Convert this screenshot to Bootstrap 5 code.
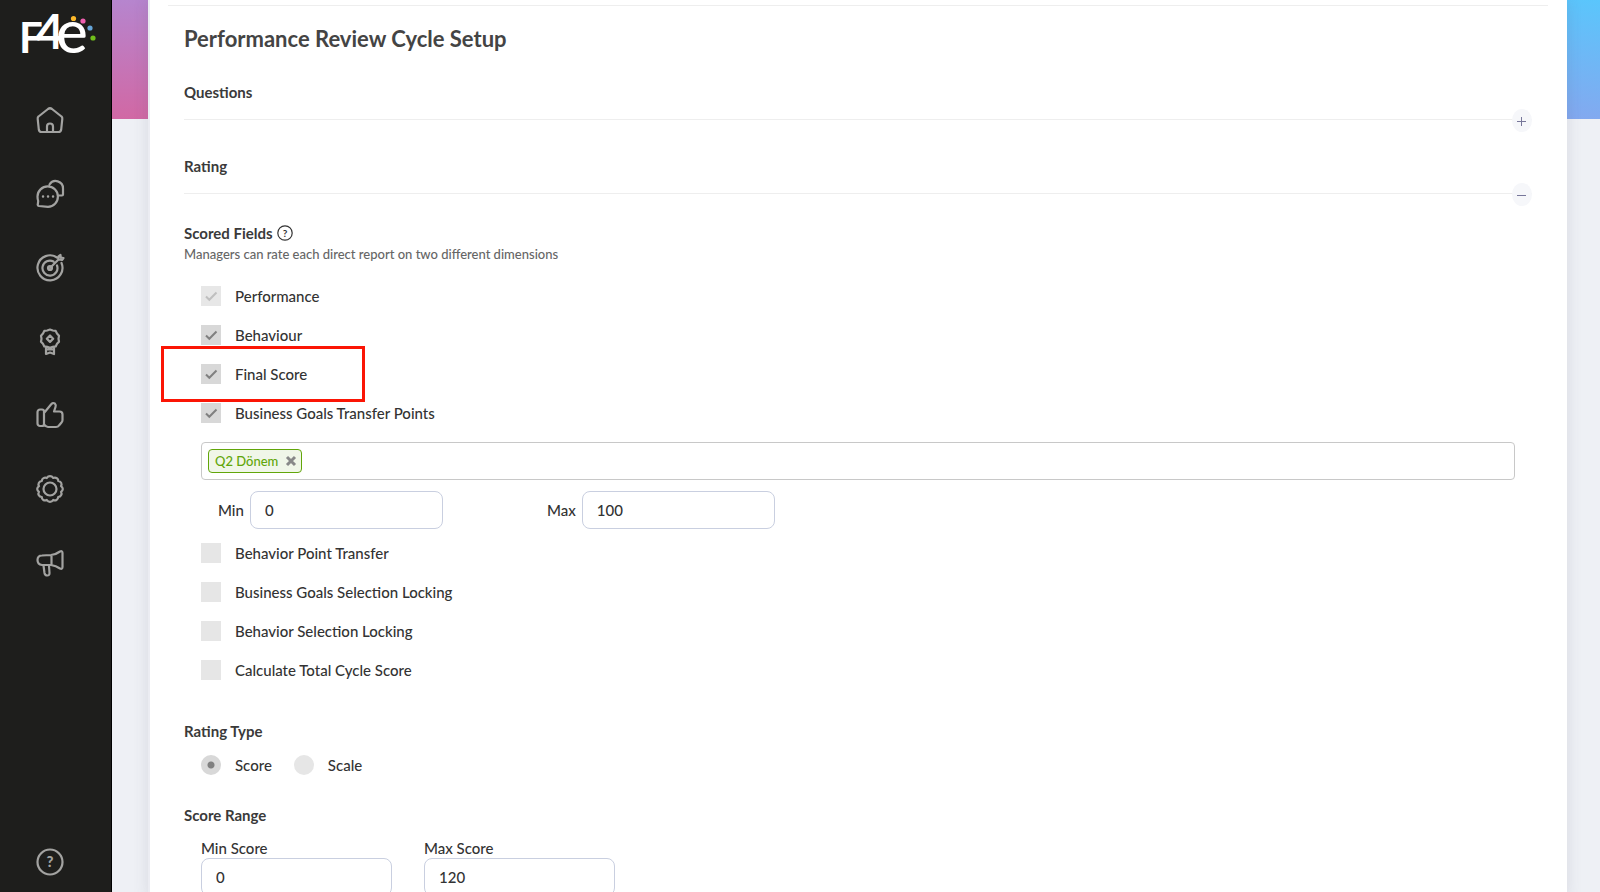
<!DOCTYPE html>
<html lang="en">
<head>
<meta charset="utf-8">
<meta name="viewport" content="width=device-width, initial-scale=1">
<title>Performance Review Cycle Setup</title>
<link rel="stylesheet" href="https://cdn.jsdelivr.net/npm/bootstrap@5.3.0/dist/css/bootstrap.min.css">
<script src="https://cdn.jsdelivr.net/npm/bootstrap@5.3.0/dist/js/bootstrap.bundle.min.js" defer></script>
<style>
  body { font-family: Lato, "Liberation Sans", sans-serif; font-size: 15px; line-height: 20px; font-weight: 500; color: #333; background: #eef0f5; }
  .side { width: 112px; background: #1e1e1c; border-right: 1px solid #000; padding: 8px 11px 16px 0; }
  .side a { color: #a3a3a1; line-height: 0; }
  .side svg { fill: none; stroke: currentColor; stroke-width: 2.2; stroke-linecap: round; stroke-linejoin: round; overflow: visible; }
  .side .logo text { fill: #fff; stroke: none; font-family: Lato, sans-serif; }
  .side-menu { gap: 46px; margin-top: 50px; }
  .stage { padding: 0 33px 0 36px;
    background: linear-gradient(#b685ce, #d168a4) left top / 38px 119px no-repeat,
                linear-gradient(190deg, #5ac6fc, #84a8ef) right top / 33px 119px no-repeat; }
  .sheet { background: #fff; border-left: 2px solid #ebecf2; box-shadow: 0 0 14px 1px rgba(70, 75, 100, .12); padding: 5px 19px 0 18px; min-height: 100%; }
  .sheet-top { border-top: 1px solid #eee; padding: 20px 16px 0; }
  h1 { font-size: 22px; line-height: 26px; font-weight: 700; color: #444; margin: 0 0 30px; }
  h2 { font-size: 15px; line-height: 20px; font-weight: 700; margin: 0; color: #3a3a3a; }
  .fold { border-bottom: 1px solid #eee; height: 38px; margin-bottom: 36px; }
  .fold-btn { position: absolute; right: 0; bottom: -13px; width: 20px; height: 23px; border: 0; border-radius: 50%; background: #f6f7fa; padding: 0; line-height: 0; color: #77779a; }
  .scored { margin-top: -7px; margin-bottom: 1px; }
  .hint { font-size: 13px; color: #666; margin-bottom: 22px; }
  .fields { padding: 0 17px; }
  .tick { gap: 14px; margin-bottom: 19px; min-height: 20px; }
  .tick input { appearance: none; width: 20px; height: 20px; margin: 0; background: #e6e6e6 center / 20px no-repeat; flex: none; }
  .tick input:checked { background-color: #d8d8d8; }
  .tick input[type=checkbox]:checked { background-image: url("data:image/svg+xml,%3Csvg xmlns='http://www.w3.org/2000/svg' viewBox='0 0 20 20'%3E%3Cpath d='M5 10.500l3.300 3.300L15.500 6.500' fill='none' stroke='%23808080' stroke-width='2'/%3E%3C/svg%3E"); }
  .tick input:disabled { opacity: .5; background-color: #d0d0d0 !important; }
  .tick input[type=radio] { border-radius: 50%; }
  .tick input[type=radio]:checked { background-image: radial-gradient(circle, #808080 3px, transparent 4px); }
  .callout { position: absolute; left: -40px; top: -18px; width: 204px; height: 56px; border: 3px solid #fb1505; pointer-events: none; }
  .tags { height: 38px; border: 1px solid #c8c8c8; border-radius: 4px; padding: 0 6px; margin-bottom: 11px; }
  .tag-item { height: 24px; border: 1px solid #62a60a; border-radius: 4px; background: #f0f6e8; color: #62a60a; font-size: 13px; padding: 0 4px 0 6px; gap: 7px; }
  .tag-item button { border: 0; background: none; padding: 0; line-height: 0; color: #888; }
  .num { height: 38px; width: 193px; border: 1px solid #c9cfe0; border-radius: 8px; padding: 0 14px; font-size: 15px; color: #333; font-weight: 500; }
  .limits { padding-left: 17px; gap: 104px; margin-bottom: 14px; }
  .limit { gap: 6px; }
  .num.range { width: 191px; }
  .rating-type { padding-top: 22px; margin-bottom: 14px; }
  .rating-options { gap: 22px; }
  .score-range { padding-top: 11px; margin-bottom: 13px; }
</style>
</head>
<body>
<div class="d-flex vh-100 overflow-hidden">
  <nav class="side d-flex flex-column align-items-center flex-shrink-0" aria-label="Main">
    <a class="logo" href="#" aria-label="F4e home">
      <svg width="99" height="48" viewBox="0 0 99 48">
        <text x="18" y="45" font-size="42" font-weight="700">F</text>
        <text x="35" y="41" font-size="48" font-weight="700">4</text>
        <text x="55" y="45" font-size="60">e</text>
        <g stroke="none"><circle cx="72.500" cy="10.500" r="2.600" fill="#fdb92a"/><circle cx="82" cy="13" r="2.600" fill="#ee5fae"/><circle cx="89" cy="20" r="2.600" fill="#65a5d8"/><circle cx="92" cy="30" r="2.600" fill="#71bf1b"/></g>
      </svg>
    </a>
    <div class="side-menu d-flex flex-column">
      <a href="#" aria-label="Home"><svg width="28" height="28" viewBox="0 0 28 28"><path d="M2.500 10.500Q1.500 11.200 1.700 13L2.800 23.500Q3.200 26 5.500 26h17Q24.800 26 25.200 23.500L26.300 13Q26.500 11.200 25.500 10.500L16 3Q14 1.500 12 3zM11 26v-5.500a3 3 0 0 1 6 0V26"/></svg></a>
      <a href="#" aria-label="Feedback"><svg width="28" height="28" viewBox="0 0 28 28"><path d="M1.500 16.500A10.200 10.200 0 1 1 12 26.800L3 26Q1.500 25.800 1.800 24.300l.4-3.300Q1.500 19 1.500 16.500zM13.500 4.500A7.300 7.300 0 0 1 27 8.500L27 14.500Q27 15.500 26 15.500H22.500"/><path d="M7 16.500h.1M12 16.500h.1M17 16.500h.1" stroke-width="2.400"/></svg></a>
      <a href="#" aria-label="Goals"><svg width="28" height="28" viewBox="0 0 28 28"><path d="M21 3.500A12.500 12.500 0 1 0 25.500 9M17.500 7.500a7.500 7.500 0 1 0 3.500 4M14 14l8.500-8.500M22.500 5.500V2.500L24.500 1l.3 2.700 2.700.3L26 6z"/><circle cx="14" cy="14" r="2"/></svg></a>
      <a href="#" aria-label="Development"><svg width="28" height="28" viewBox="0 0 28 28"><path d="M14 1.500l2.800 1 2.900.4 1.300 2.600 2 2.200-.5 3 .5 3-2 2.100-1.300 2.600-2.900.5-2.800 1-2.800-1-2.900-.5L7 15.800l-2-2.100.5-3-.5-3L7 5.500l1.300-2.600 2.900-.4zM10 19.500V26l4-1.500 4 1.500v-6.500M10 21.500h8"/><path d="M14 7.500l3.200 3.200-3.200 3.200-3.200-3.200z"/></svg></a>
      <a href="#" aria-label="Recognition"><svg width="28" height="28" viewBox="0 0 28 28"><path d="M4 7.500h2a2 2 0 0 1 2 2V22a2 2 0 0 1-2 2H4a2.500 2.500 0 0 1-2.500-2.500V10A2.500 2.500 0 0 1 4 7.500zM8 11l7-8.500q2-2.500 4-.8 1.300 1.300.5 3.300L18 9.500h5.500q3 0 3 3V18q0 1.500-1 2.500l-2.500 3q-1 1.500-3 1.500h-8q-2 0-4-2.500"/></svg></a>
      <a href="#" aria-label="Settings"><svg width="28" height="28" viewBox="0 0 28 28"><path d="M14 .2q2 0 3.200 1.800 2-.8 3.700.2T22.200 5q2.200.2 3 1.900t-.2 3.300q1.800 1.200 1.800 2.800T25 15.800q1 1.800.1 3.400T22.200 21q-.1 2.100-1.700 3t-3.300 0q-1.200 1.800-3.200 1.800T10.800 24q-1.900.9-3.500 0T5.800 21q-2.100-.2-3-1.800T3 15.800Q1.200 14.600 1.200 13T3 10.200Q2 8.500 2.800 6.900T5.800 5q.1-2 1.700-2.900T10.800 2Q12 .2 14 .2z"/><circle cx="14" cy="13" r="6.500"/></svg></a>
      <a href="#" aria-label="Announcements"><svg width="28" height="28" viewBox="0 0 28 28"><path d="M15 5q5-.5 9-3.500 2.500-1 2.500 1.500v14q0 2.500-2.500 1.500-4-2.700-9-3.500H6q-4.500-.5-4.500-5T6 5.500zM15.500 5v10M7.500 15.500l1 7.500q.5 2.500 2.800 2.500t2.200-2.500L13 15.500"/></svg></a>
    </div>
    <a class="mt-auto" href="#" aria-label="Help"><svg width="28" height="28" viewBox="0 0 28 28"><circle cx="14" cy="14" r="12.500"/><text x="14" y="19" text-anchor="middle" font-size="15" font-weight="900" fill="currentColor" stroke="none">?</text></svg></a>
  </nav>

  <main class="stage flex-grow-1">
    <div class="sheet">
      <div class="sheet-top">
        <h1>Performance Review Cycle Setup</h1>
        <div class="fold position-relative"><h2>Questions</h2>
          <button class="fold-btn" type="button" aria-label="Expand Questions"><svg width="10" height="10" stroke="currentColor"><path d="M0 5.500h9M4.500 1v9"/></svg></button></div>
        <div class="fold position-relative"><h2>Rating</h2>
          <button class="fold-btn" type="button" aria-label="Collapse Rating"><svg width="10" height="10" stroke="currentColor"><path d="M0 5.500h9"/></svg></button></div>

        <form>
          <h2 class="scored d-flex align-items-center gap-1">Scored Fields
            <svg width="16" height="16" viewBox="0 0 16 16" role="img" aria-label="Help"><circle cx="8" cy="8" r="7.200" fill="none" stroke="#333" stroke-width="1.200"/><text x="8" y="11.500" text-anchor="middle" font-size="10" font-weight="700" fill="#333">?</text></svg></h2>
          <p class="hint">Managers can rate each direct report on two different dimensions</p>
          <div class="fields">
            <label class="tick d-flex align-items-center"><input type="checkbox" checked disabled>Performance</label>
            <label class="tick d-flex align-items-center"><input type="checkbox" checked>Behaviour</label>
            <label class="tick d-flex align-items-center position-relative"><input type="checkbox" checked>Final Score<span class="callout"></span></label>
            <label class="tick d-flex align-items-center"><input type="checkbox" checked>Business Goals Transfer Points</label>
            <div class="tags d-flex align-items-center">
              <span class="tag-item d-flex align-items-center">Q2 Dönem
                <button type="button" aria-label="Remove Q2 Dönem"><svg width="12" height="12" stroke="currentColor" stroke-width="3"><path d="M2 2l8 8M10 2l-8 8"/></svg></button></span>
            </div>
            <div class="limits d-flex align-items-center">
              <div class="limit d-flex align-items-center"><label for="min">Min</label><input class="num" id="min" type="text" value="0"></div>
              <div class="limit d-flex align-items-center"><label for="max">Max</label><input class="num" id="max" type="text" value="100"></div>
            </div>
            <label class="tick d-flex align-items-center"><input type="checkbox">Behavior Point Transfer</label>
            <label class="tick d-flex align-items-center"><input type="checkbox">Business Goals Selection Locking</label>
            <label class="tick d-flex align-items-center"><input type="checkbox">Behavior Selection Locking</label>
            <label class="tick d-flex align-items-center"><input type="checkbox">Calculate Total Cycle Score</label>
          </div>

          <h2 class="rating-type">Rating Type</h2>
          <div class="fields rating-options d-flex">
            <label class="tick d-flex align-items-center"><input type="radio" name="type" checked>Score</label>
            <label class="tick d-flex align-items-center"><input type="radio" name="type">Scale</label>
          </div>

          <h2 class="score-range">Score Range</h2>
          <div class="fields d-flex">
            <div class="me-4"><label class="d-block" for="lo">Min Score</label><input class="num range" id="lo" type="text" value="0"></div>
            <div class="ms-2"><label class="d-block" for="hi">Max Score</label><input class="num range" id="hi" type="text" value="120"></div>
          </div>
        </form>
      </div>
    </div>
  </main>
</div>
</body>
</html>
